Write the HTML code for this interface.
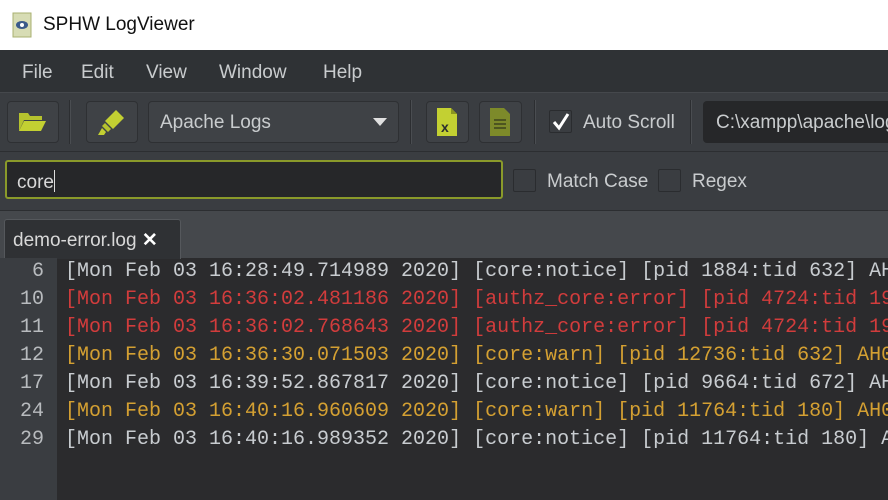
<!DOCTYPE html>
<html><head><style>
*{margin:0;padding:0;box-sizing:border-box}
html,body{width:888px;height:500px;overflow:hidden}
body{background:#2b2b2d;font-family:"Liberation Sans",sans-serif;position:relative}
#w{position:absolute;left:0;top:0;width:888px;height:500px;overflow:hidden}
.a{position:absolute}
.t{color:#c9ccce;font-size:19px;white-space:nowrap}
.btn{position:absolute;background:#3f4246;border:1px solid #2e3033;border-radius:4px}
.sep{position:absolute;width:2px;background:#2c2e31;border-right:1px solid #4a4d51}
.cb{position:absolute;width:23px;height:23px;background:#3a3d41;border:1px solid #2a2c2f;border-radius:2px}
.code{position:absolute;left:65px;font-family:"Liberation Mono",monospace;font-size:20px;white-space:pre;line-height:28px}
.ln{position:absolute;left:0;width:44px;text-align:right;font-family:"Liberation Mono",monospace;font-size:20px;line-height:28px;color:#b8bbbe;white-space:pre}
</style></head><body><div id="w">
<div class="a" style="left:0;top:0;width:888px;height:50px;background:#fff"></div>
<svg class="a" style="left:12px;top:12px" width="20" height="26"><rect x="1" y="1" width="18" height="24" fill="#d7dcb4" stroke="#aab070"/><ellipse cx="10" cy="13" rx="6" ry="4" fill="#3a5a8a"/><circle cx="10" cy="13" r="2" fill="#fff"/></svg>
<div class="a" style="left:43px;top:14px;font-size:19px;color:#111">SPHW LogViewer</div>
<div class="a" style="left:0;top:50px;width:888px;height:42px;background:#2f3235"></div>
<div class="a t" style="left:22px;top:62px">File</div>
<div class="a t" style="left:81px;top:62px">Edit</div>
<div class="a t" style="left:146px;top:62px">View</div>
<div class="a t" style="left:219px;top:62px">Window</div>
<div class="a t" style="left:323px;top:62px">Help</div>
<div class="a" style="left:0;top:92px;width:888px;height:60px;background:#3a3d41;border-top:1px solid #45484c;border-bottom:1px solid #2c2e31"></div>
<div class="btn" style="left:7px;top:101px;width:52px;height:42px"></div>
<svg class="a" style="left:18px;top:111px" width="30" height="22"><path d="M1 2h9l2 3h12v4H6L1 20z" fill="#b5c22e"/><path d="M6 10h22l-5 10H1z" fill="#c3d032"/></svg>
<div class="sep" style="left:69px;top:100px;height:44px"></div>
<div class="btn" style="left:86px;top:101px;width:52px;height:42px"></div>
<svg class="a" style="left:96px;top:107px" width="32" height="32"><path d="M20 3l8 8-11 11-8-8z" fill="#c3d032"/><path d="M9 16l6 6-3 3-6-6z" fill="#b5c22e"/><path d="M6 21l4 4-2 3H2z" fill="#c3d032"/></svg>
<div class="btn" style="left:148px;top:101px;width:251px;height:42px"></div>
<div class="a t" style="left:160px;top:112px">Apache Logs</div>
<svg class="a" style="left:373px;top:118px" width="14" height="9"><path d="M0 0h14L7 8z" fill="#e0e0e0"/></svg>
<div class="sep" style="left:410px;top:100px;height:44px"></div>
<div class="btn" style="left:426px;top:101px;width:43px;height:42px"></div>
<svg class="a" style="left:436px;top:107px" width="22" height="30"><path d="M1 1h14l6 6v22H1z" fill="#c3d032"/><path d="M15 1v6h6" fill="#8a9420"/><text x="5" y="25" font-family="Liberation Sans" font-size="14" font-weight="bold" fill="#2b2d2f">x</text></svg>
<div class="btn" style="left:479px;top:101px;width:43px;height:42px"></div>
<svg class="a" style="left:489px;top:107px" width="22" height="30"><path d="M1 1h14l6 6v22H1z" fill="#7d8a2a"/><path d="M5 13h12M5 17h12M5 21h12" stroke="#4d5520" stroke-width="2"/></svg>
<div class="sep" style="left:534px;top:100px;height:44px"></div>
<div class="cb" style="left:549px;top:110px"></div>
<svg class="a" style="left:551px;top:112px" width="20" height="20"><path d="M3 10l5 6 9-14" stroke="#fff" stroke-width="3" fill="none"/></svg>
<div class="a t" style="left:583px;top:112px">Auto Scroll</div>
<div class="sep" style="left:690px;top:100px;height:44px"></div>
<div class="a" style="left:703px;top:101px;width:190px;height:42px;background:#262729;border-radius:4px"></div>
<div class="a t" style="left:716px;top:112px;width:172px;overflow:hidden">C:\xampp\apache\logs</div>
<div class="a" style="left:0;top:152px;width:888px;height:58px;background:#3a3d41"></div>
<div class="a" style="left:5px;top:160px;width:498px;height:39px;background:#262729;border:2px solid #8a9a2a;border-radius:3px"></div>
<div class="a t" style="left:17px;top:170px;color:#d8d8d8">core<span style="display:inline-block;width:1px;height:22px;background:#ddd;vertical-align:-4px"></span></div>
<div class="cb" style="left:513px;top:169px"></div>
<div class="a t" style="left:547px;top:171px">Match Case</div>
<div class="cb" style="left:658px;top:169px"></div>
<div class="a t" style="left:692px;top:171px">Regex</div>
<div class="a" style="left:0;top:210px;width:888px;height:48px;background:#45484c;border-top:1px solid #2c2e31"></div>
<div class="a" style="left:4px;top:219px;width:177px;height:40px;background:#2f3134;border:1px solid #55585c;border-bottom:none;border-radius:3px 3px 0 0"></div>
<div class="a t" style="left:13px;top:229px;color:#d8d8d8">demo-error.log <b style="color:#fff">✕</b></div>
<div class="a" style="left:0;top:258px;width:57px;height:242px;background:#3a3d41"></div>
<div class="ln" style="top:258px"> 6
10
11
12
17
24
29</div>
<div class="code" style="top:258px;width:823px;overflow:hidden"><span style="color:#c8ccd0">[Mon Feb 03 16:28:49.714989 2020] [core:notice] [pid 1884:tid 632] AH00094</span>
<span style="color:#d23c3c">[Mon Feb 03 16:36:02.481186 2020] [authz_core:error] [pid 4724:tid 1964]</span>
<span style="color:#d23c3c">[Mon Feb 03 16:36:02.768643 2020] [authz_core:error] [pid 4724:tid 1964]</span>
<span style="color:#d4a032">[Mon Feb 03 16:36:30.071503 2020] [core:warn] [pid 12736:tid 632] AH00098</span>
<span style="color:#c8ccd0">[Mon Feb 03 16:39:52.867817 2020] [core:notice] [pid 9664:tid 672] AH00094</span>
<span style="color:#d4a032">[Mon Feb 03 16:40:16.960609 2020] [core:warn] [pid 11764:tid 180] AH00098</span>
<span style="color:#c8ccd0">[Mon Feb 03 16:40:16.989352 2020] [core:notice] [pid 11764:tid 180] AH00</span></div>
</div></body></html>
